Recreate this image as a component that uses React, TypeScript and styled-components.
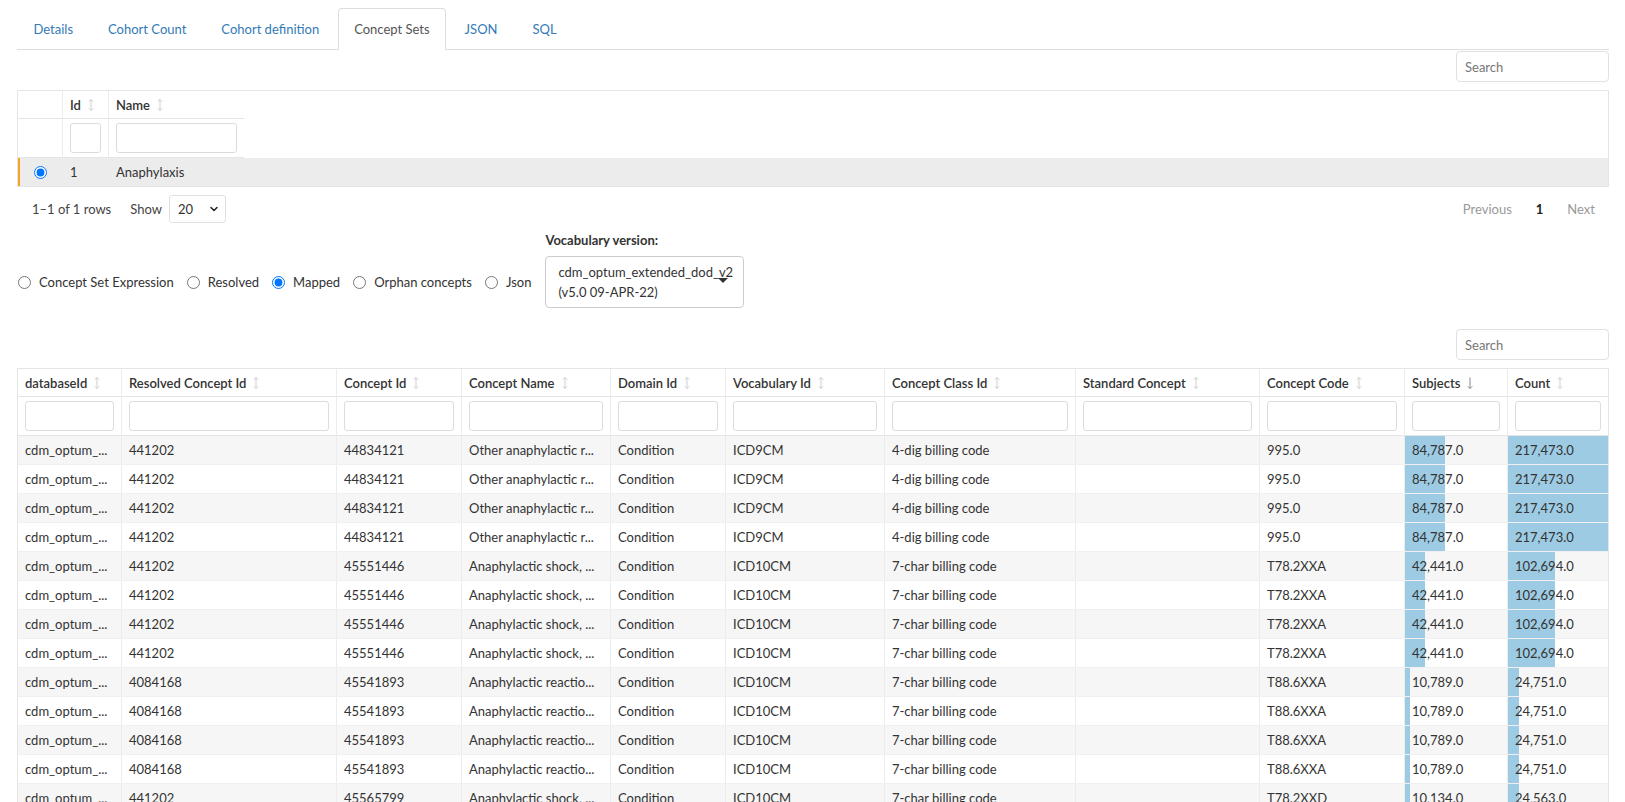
import React from "react";
import styled, { createGlobalStyle, css } from "styled-components";
import { ChevronDown } from "lucide-react";

const GlobalStyle = createGlobalStyle`
  html, body { margin: 0; padding: 0; background: #fff; }
  body {
    font-family: Lato, "Open Sans", "Liberation Sans", sans-serif;
    font-size: 13px;
    line-height: 20px;
    color: #333;
  }
  *, *::before, *::after { box-sizing: border-box; }
  input, select { font-family: inherit; font-size: 13px; color: #333; }
`;

const Page = styled.div`
  padding: 8px 16px 0 17px;
`;

/* ---------- tabs ---------- */
const TabBar = styled.ul`
  list-style: none;
  margin: 0;
  padding: 0;
  display: flex;
  border-bottom: 1px solid #ddd;
`;

const Tab = styled.li<{ $active?: boolean }>`
  margin: 0 2px -1px 0;
  padding: 10px 15.5px;
  line-height: 20px;
  border: 1px solid transparent;
  border-radius: 4px 4px 0 0;
  color: #337ab7;
  cursor: pointer;
  ${(p) =>
    p.$active &&
    css`
      color: #555;
      background: #fff;
      border-color: #ddd #ddd transparent;
    `}
`;

/* ---------- search ---------- */
const SearchRow = styled.div<{ $top: number }>`
  display: flex;
  justify-content: flex-end;
  margin-top: ${(p) => p.$top}px;
`;

const SearchInput = styled.input`
  width: 153px;
  height: 31px;
  padding: 0 8px;
  border: 1px solid #e1e1e1;
  border-radius: 4px;
  outline: none;
  &::placeholder { color: #777; }
`;

/* ---------- generic table parts ---------- */
const TableBox = styled.div`
  margin-top: 8px;
  border: 1px solid #e5e5e5;
`;

const Row = styled.div<{ $cols: string; $selected?: boolean; $stripe?: boolean }>`
  display: grid;
  grid-template-columns: ${(p) => p.$cols};
  ${(p) => p.$stripe && css`background: #f6f6f6;`}
  ${(p) =>
    p.$selected &&
    css`
      background: #ececec;
      box-shadow: inset 2px 0 0 #f5a623;
    `}
`;

const HeadCell = styled.div<{ $end?: boolean; $none?: boolean }>`
  height: 28px;
  padding: 0 7px;
  display: flex;
  align-items: center;
  gap: 6px;
  font-weight: 600;
  color: #333;
  white-space: nowrap;
  overflow: hidden;
  border-bottom: ${(p) => (p.$none ? "none" : "1px solid #e5e5e5")};
  border-right: ${(p) => (p.$end || p.$none ? "none" : "1px solid #ececec")};
`;

const FilterCell = styled.div<{ $end?: boolean; $none?: boolean }>`
  height: 39px;
  padding: 4px 7px 4px 7px;
  border-bottom: ${(p) => (p.$none ? "none" : "1px solid #e5e5e5")};
  border-right: ${(p) => (p.$end || p.$none ? "none" : "1px solid #ececec")};
`;

const FilterInput = styled.input`
  width: 100%;
  height: 30px;
  border: 1px solid #dcdcdc;
  border-radius: 3px;
  outline: none;
  padding: 0 6px;
  background: #fff;
`;

const BodyRow = styled(Row)`
  border-top: 1px solid #f0f0f0;
  &:first-of-type { border-top: none; }
`;

const Cell = styled.div<{ $end?: boolean; $center?: boolean }>`
  position: relative;
  height: 28px;
  line-height: 28px;
  padding: 0 7px;
  white-space: nowrap;
  overflow: hidden;
  border-right: ${(p) => (p.$end ? "none" : "1px solid #ececec")};
  ${(p) =>
    p.$center &&
    css`
      display: flex;
      align-items: center;
      justify-content: center;
    `}
`;

const Bar = styled.div`
  position: absolute;
  left: 0;
  top: 0;
  bottom: 0;
  background: #9dcbe3;
`;

const CellText = styled.span`
  position: relative;
`;

const RowRadio = styled.input`
  margin: 0;
  width: 13px;
  height: 13px;
`;

/* ---------- pager ---------- */
const Pager = styled.div`
  display: flex;
  align-items: center;
  justify-content: space-between;
  height: 43px;
  padding: 0 2px 0 15px;
`;

const PagerInfo = styled.div`
  display: flex;
  align-items: center;
  gap: 19px;
  color: #444;
`;

const ShowGroup = styled.label`
  display: flex;
  align-items: center;
  gap: 7px;
`;

const SelectWrap = styled.div`
  position: relative;
  display: flex;
`;

const PageSelect = styled.select`
  appearance: none;
  width: 57px;
  height: 28px;
  padding: 0 8px;
  border: 1px solid #e1e1e1;
  border-radius: 3px;
  background: #fff;
  outline: none;
`;

const SelectChevron = styled(ChevronDown)`
  position: absolute;
  right: 6px;
  top: 8px;
  pointer-events: none;
  color: #222;
`;

const PageButtons = styled.div`
  display: flex;
  align-items: center;
`;

const PageButton = styled.span<{ $current?: boolean }>`
  padding: 4px 12px;
  color: ${(p) => (p.$current ? "#222" : "#999")};
  font-weight: ${(p) => (p.$current ? 700 : 400)};
`;

/* ---------- controls ---------- */
const Controls = styled.div`
  display: flex;
  align-items: flex-end;
  gap: 14px;
  padding-left: 1px;
`;

const RadioGroup = styled.div`
  display: flex;
  align-items: center;
  gap: 13px;
  height: 52px;
`;

const RadioLabel = styled.label`
  display: flex;
  align-items: center;
  gap: 8px;
  white-space: nowrap;
`;

const RadioInput = styled.input`
  margin: 0;
  width: 13px;
  height: 13px;
`;

const VocabGroup = styled.div`
  display: flex;
  flex-direction: column;
`;

const VocabLabel = styled.div`
  font-weight: 700;
  margin-bottom: 6px;
`;

const VocabBox = styled.div`
  position: relative;
  width: 199px;
  height: 52px;
  padding: 5px 12px;
  border: 1px solid #ccc;
  border-radius: 4px;
  overflow: hidden;
  white-space: nowrap;
  background: #fff;
`;

const VocabCaret = styled.span`
  position: absolute;
  right: 15px;
  top: 21px;
  border-style: solid;
  border-width: 5px 5px 0 5px;
  border-color: #333 transparent transparent transparent;
`;

/* ---------- sort icons ---------- */
const SortIcon = ({ dir }: { dir?: "down" }) =>
  dir === "down" ? (
    <svg width="8" height="14" viewBox="0 0 8 14" fill="none" stroke="#8a8a8a" strokeWidth="1">
      <path d="M4 1.5V12.5M1.8 10.3L4 12.5L6.2 10.3" />
    </svg>
  ) : (
    <svg width="8" height="14" viewBox="0 0 8 14" fill="none" stroke="#cfcfcf" strokeWidth="1">
      <path d="M4 1.5V12.5M1.8 3.7L4 1.5L6.2 3.7M1.8 10.3L4 12.5L6.2 10.3" />
    </svg>
  );

/* ---------- data ---------- */
const topCols = "45px 46px 135px 1fr";
const mainCols = "104px 215px 125px 149px 115px 159px 191px 184px 145px 103px 1fr";

const headers = [
  "databaseId",
  "Resolved Concept Id",
  "Concept Id",
  "Concept Name",
  "Domain Id",
  "Vocabulary Id",
  "Concept Class Id",
  "Standard Concept",
  "Concept Code",
  "Subjects",
  "Count",
];

type Group = [string, string, string, string, string, string, number, number];
const groups: Group[] = [
  ["441202", "44834121", "Other anaphylactic r...", "ICD9CM", "4-dig billing code", "995.0", 84787, 217473],
  ["441202", "45551446", "Anaphylactic shock, ...", "ICD10CM", "7-char billing code", "T78.2XXA", 42441, 102694],
  ["4084168", "45541893", "Anaphylactic reactio...", "ICD10CM", "7-char billing code", "T88.6XXA", 10789, 24751],
  ["441202", "45565799", "Anaphylactic shock, ...", "ICD10CM", "7-char billing code", "T78.2XXD", 10134, 24563],
];
const rows = groups.flatMap((g) => [g, g, g, g]);
const maxValue = 217473;
const fmt = (n: number) =>
  n.toLocaleString("en-US", { minimumFractionDigits: 1, maximumFractionDigits: 1 });

const tabs = ["Details", "Cohort Count", "Cohort definition", "Concept Sets", "JSON", "SQL"];
const views = ["Concept Set Expression", "Resolved", "Mapped", "Orphan concepts", "Json"];

const BarCell = ({ value, end }: { value: number; end?: boolean }) => (
  <Cell $end={end}>
    <Bar style={{ width: `${(value / maxValue) * 100}%` }} />
    <CellText>{fmt(value)}</CellText>
  </Cell>
);

export default function App() {
  return (
    <Page>
      <GlobalStyle />
      <TabBar>
        {tabs.map((t) => (
          <Tab key={t} $active={t === "Concept Sets"}>
            {t}
          </Tab>
        ))}
      </TabBar>

      <SearchRow $top={1}>
        <SearchInput placeholder="Search" />
      </SearchRow>

      <TableBox>
        <Row $cols={topCols}>
          <HeadCell />
          <HeadCell>
            Id <SortIcon />
          </HeadCell>
          <HeadCell $end>
            Name <SortIcon />
          </HeadCell>
          <HeadCell $none />
        </Row>
        <Row $cols={topCols}>
          <FilterCell />
          <FilterCell>
            <FilterInput />
          </FilterCell>
          <FilterCell $end>
            <FilterInput />
          </FilterCell>
          <FilterCell $none />
        </Row>
        <Row $cols={topCols} $selected>
          <Cell $center>
            <RowRadio type="radio" defaultChecked name="conceptset" />
          </Cell>
          <Cell>1</Cell>
          <Cell $end>Anaphylaxis</Cell>
          <Cell $end />
        </Row>
      </TableBox>

      <Pager>
        <PagerInfo>
          <span>1–1 of 1 rows</span>
          <ShowGroup>
            Show
            <SelectWrap>
              <PageSelect defaultValue="20">
                <option value="10">10</option>
                <option value="20">20</option>
                <option value="50">50</option>
              </PageSelect>
              <SelectChevron size={12} strokeWidth={3} />
            </SelectWrap>
          </ShowGroup>
        </PagerInfo>
        <PageButtons>
          <PageButton>Previous</PageButton>
          <PageButton $current>1</PageButton>
          <PageButton>Next</PageButton>
        </PageButtons>
      </Pager>

      <Controls>
        <RadioGroup>
          {views.map((v) => (
            <RadioLabel key={v}>
              <RadioInput type="radio" name="view" defaultChecked={v === "Mapped"} />
              {v}
            </RadioLabel>
          ))}
        </RadioGroup>
        <VocabGroup>
          <VocabLabel>Vocabulary version:</VocabLabel>
          <VocabBox>
            <div>cdm_optum_extended_dod_v2</div>
            <div>(v5.0 09-APR-22)</div>
            <VocabCaret />
          </VocabBox>
        </VocabGroup>
      </Controls>

      <SearchRow $top={21}>
        <SearchInput placeholder="Search" />
      </SearchRow>

      <TableBox>
        <Row $cols={mainCols}>
          {headers.map((h, i) => (
            <HeadCell key={h} $end={i === headers.length - 1}>
              {h} <SortIcon dir={h === "Subjects" ? "down" : undefined} />
            </HeadCell>
          ))}
        </Row>
        <Row $cols={mainCols}>
          {headers.map((h, i) => (
            <FilterCell key={h} $end={i === headers.length - 1}>
              <FilterInput />
            </FilterCell>
          ))}
        </Row>
        <div>
          {rows.map((r, i) => (
            <BodyRow key={i} $cols={mainCols} $stripe={i % 2 === 0}>
              <Cell>cdm_optum_...</Cell>
              <Cell>{r[0]}</Cell>
              <Cell>{r[1]}</Cell>
              <Cell>{r[2]}</Cell>
              <Cell>Condition</Cell>
              <Cell>{r[3]}</Cell>
              <Cell>{r[4]}</Cell>
              <Cell />
              <Cell>{r[5]}</Cell>
              <BarCell value={r[6]} />
              <BarCell value={r[7]} end />
            </BodyRow>
          ))}
        </div>
      </TableBox>
    </Page>
  );
}
